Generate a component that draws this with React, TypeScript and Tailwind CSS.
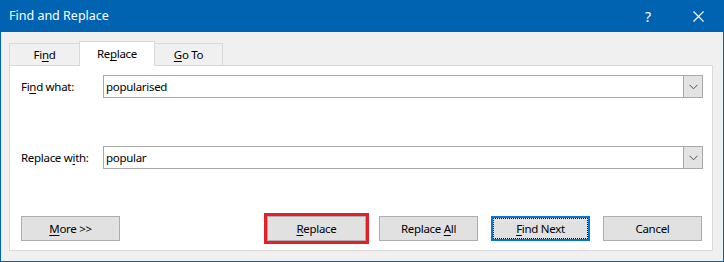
import { ReactNode } from 'react';

const font = { fontFamily: '"Noto Sans", "Open Sans", Arial, sans-serif' };

const Chevron = () => (
  <svg width="9" height="6" viewBox="0 0 9 6" fill="none">
    <path d="M0.5 0.8 L4.5 4.8 L8.5 0.8" stroke="#505050" strokeWidth="1" />
  </svg>
);

const Combo = ({ value }: { value: string }) => (
  <div className="flex h-[23px] w-[600px] border border-[#a9a9a9] bg-white">
    <div className="flex flex-1 items-center pl-[2px] text-black">{value}</div>
    <div className="flex w-[19px] items-center justify-center border-l border-[#a9a9a9] bg-[#e3e3e3]">
      <Chevron />
    </div>
  </div>
);

const Button = ({ children, focused }: { children: ReactNode; focused?: boolean }) => (
  <div
    className={
      focused
        ? 'flex h-[25px] w-[99px] items-center justify-center border-2 border-[#0078d7] bg-[#e1e1e1] text-black'
        : 'flex h-[25px] w-[99px] items-center justify-center border border-[#adadad] bg-[#e1e1e1] text-black'
    }
  >
    {focused ? (
      <div className="flex h-full w-full items-center justify-center border border-dotted border-black">{children}</div>
    ) : (
      children
    )}
  </div>
);

const U = ({ children }: { children: ReactNode }) => (
  <span className="underline underline-offset-[2px]">{children}</span>
);

export default function App() {
  return (
    <div className="flex h-[262px] w-[724px] flex-col border border-[#0063b1] bg-[#f0f0f0]" style={font}>
      {/* Title bar */}
      <div className="flex h-[31px] shrink-0 items-center bg-[#0063b1] pl-[8px] text-white">
        <span className="text-[12.5px]">Find and Replace</span>
        <span className="ml-auto mr-[42px] text-[14px]">?</span>
        <svg width="11" height="11" viewBox="0 0 11 11" className="mr-[19px]">
          <path d="M0.5 0.5 L10.5 10.5 M10.5 0.5 L0.5 10.5" stroke="white" strokeWidth="1.1" />
        </svg>
      </div>

      <div className="flex flex-1 flex-col px-[8px] pt-[9px] text-[11.5px] tracking-[-0.3px]">
        {/* Tabs */}
        <div className="relative z-10 -mb-px flex items-end text-black">
          <div className="flex h-[23px] w-[71px] items-center justify-center border border-[#d9d9d9] bg-[#f0f0f0] pt-px">
            Fi<U>n</U>d
          </div>
          <div className="-ml-px flex h-[25px] w-[76px] items-center justify-center border border-b-0 border-[#d9d9d9] bg-white">
            Re<U>p</U>lace
          </div>
          <div className="-ml-px flex h-[23px] w-[69px] items-center justify-center border border-[#d9d9d9] bg-[#f0f0f0] pt-px">
            <U>G</U>o To
          </div>
        </div>

        {/* Panel */}
        <div className="flex h-[186px] w-[704px] flex-col border border-[#d9d9d9] bg-white pl-[11px] pr-[9px] pt-[9px] text-black">
          <div className="flex items-center">
            <span className="w-[82px]">
              Fi<U>n</U>d what:
            </span>
            <Combo value="popularised" />
          </div>

          <div className="mt-[48px] flex items-center">
            <span className="w-[82px]">
              Replace w<U>i</U>th:
            </span>
            <Combo value="popular" />
          </div>

          <div className="mt-[47px] flex items-center pr-px">
            <Button>
              <span>
                <U>M</U>ore &gt;&gt;
              </span>
            </Button>
            <div className="ml-auto flex gap-[13px]">
              <div className="relative">
                <Button>
                  <span>
                    <U>R</U>eplace
                  </span>
                </Button>
                <div className="pointer-events-none absolute -inset-[3px] border-[3px] border-[#e3202a]" />
              </div>
              <Button>
                <span>
                  Replace <U>A</U>ll
                </span>
              </Button>
              <Button focused>
                <span>
                  <U>F</U>ind Next
                </span>
              </Button>
              <Button>Cancel</Button>
            </div>
          </div>
        </div>
      </div>
    </div>
  );
}
